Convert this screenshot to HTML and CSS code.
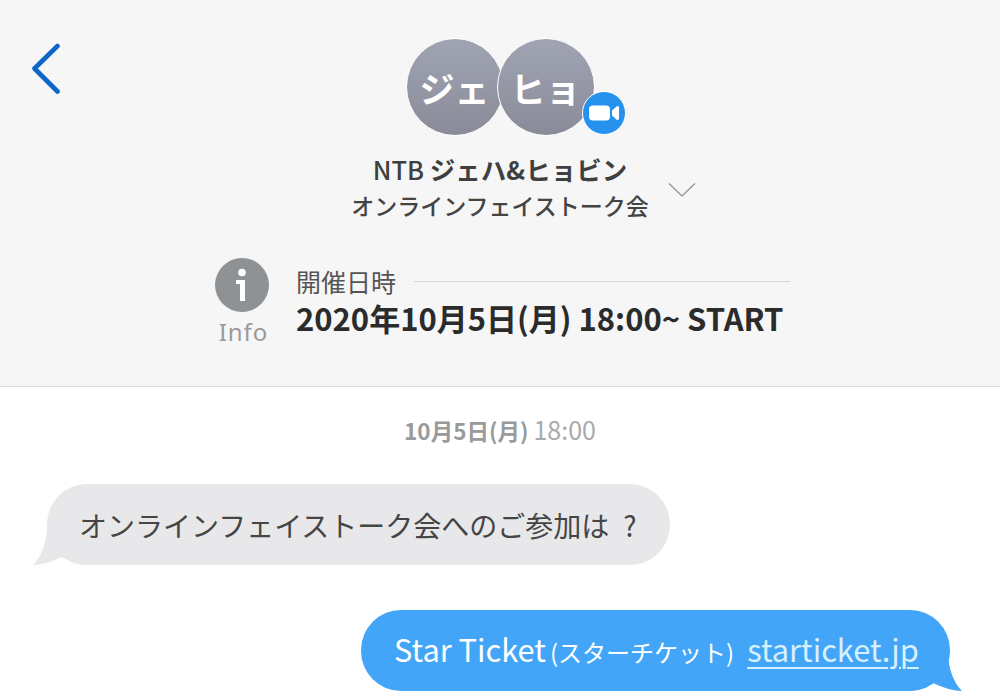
FILE: index.html
```html
<!DOCTYPE html>
<html lang="ja">
<head>
<meta charset="utf-8">
<title>Talk</title>
<link rel="stylesheet" href="styles.css">
</head>
<body>
<div class="screen">
  <header class="head">
    <svg class="back" width="30" height="52" viewBox="0 0 30 52"><path d="M26.5 3 L3.5 25.500 L26.500 48.500" fill="none" stroke="#0e66c8" stroke-width="4.600" stroke-linecap="round" stroke-linejoin="round"/></svg>
    <div class="avatars">
      <div class="avatar">ジェ</div>
      <div class="avatar second">ヒョ</div>
      <div class="badge">
        <svg width="30" height="16" viewBox="0 0 30 16"><rect x="0" y="0.500" width="21" height="15" rx="4" fill="#fff"/><path d="M23 5.500 L27.500 1.500 Q30 0 30 3 L30 13 Q30 16 27.500 14.500 L23 10.500 Z" fill="#fff"/></svg>
      </div>
    </div>
    <div class="title-row">
      <div class="title">
        <div class="name"><span class="latin">NTB</span> ジェハ&amp;ヒョビン</div>
        <div class="sub">オンラインフェイストーク会</div>
      </div>
      <svg class="chev" width="28" height="16" viewBox="0 0 28 16"><path d="M1 1.500 L14 14 L27 1.500" fill="none" stroke="#9a9a9a" stroke-width="1.500"/></svg>
    </div>
    <div class="info">
      <div class="info-side">
        <div class="info-icon">
          <svg width="14" height="34" viewBox="0 0 14 34"><circle cx="7" cy="4.500" r="3.800" fill="#fff"/><path d="M1 12 H10 V33 H5 V16 H1 Z" fill="#fff"/></svg>
        </div>
        <div class="info-label">Info</div>
      </div>
      <div class="info-main">
        <div class="info-top"><span class="info-cap">開催日時</span><span class="rule"></span></div>
        <div class="info-date">2020年10月5日(月) 18:00~ START</div>
      </div>
    </div>
  </header>
  <main class="chat">
    <div class="stamp"><b>10月5日(月)</b> <span class="time">18:00</span></div>
    <div class="row">
      <div class="bubble in"><span class="msg">オンラインフェイストーク会へのご参加は<span class="q">?</span></span>
        <svg class="tail tail-in" width="60" height="40" viewBox="0 0 60 40"><path d="M14 0 C14 18 8 32 0 40 C10 40 20 36 29 32 C36 36 44 40 54 40 L54 0 Z" fill="#e8e8ea"/></svg>
      </div>
    </div>
    <div class="row out-row">
      <div class="bubble out"><span class="msg">Star Ticket<span class="kana">(スターチケット)</span><span class="link">starticket.jp</span></span>
        <svg class="tail tail-out" width="60" height="40" viewBox="0 0 60 40"><path d="M46 0 C46 18 52 32 60 40 C50 40 40 36 31 32 C24 36 16 40 6 40 L6 0 Z" fill="#42a5f7"/></svg>
      </div>
    </div>
  </main>
</div>
</body>
</html>
```
FILE: styles.css
```css
* { box-sizing: border-box; }
html, body { margin: 0; padding: 0; }
body { background: #fff; font-family: "Noto Sans CJK JP", "Noto Sans", sans-serif; }
.screen { width: 1000px; height: 700px; overflow: hidden; }

.head {
  position: relative;
  height: 387px;
  background: #f6f6f6;
  border-bottom: 1px solid #dcdcdc;
  display: flex;
  flex-direction: column;
  align-items: center;
  padding-top: 38px;
}
.back { position: absolute; left: 31px; top: 43px; }

.avatars { position: relative; display: flex; }
.avatar {
  width: 98px;
  height: 98px;
  border-radius: 50%;
  background: linear-gradient(#a0a4b2, #8a8b99);
  border: 1.500px solid #fff;
  color: #fff;
  font-size: 35px;
  font-weight: 700;
  display: flex;
  align-items: center;
  justify-content: center;
  line-height: 1;
}
.second { margin-left: -7px; }
.badge {
  position: absolute;
  right: -31px;
  bottom: 1px;
  width: 44px;
  height: 44px;
  border-radius: 50%;
  background: #2692ee;
  border: 1.500px solid #fff;
  display: flex;
  align-items: center;
  justify-content: center;
}

.title-row { position: relative; margin-top: 15px; }
.title { text-align: center; color: #3f3f3f; }
.name { font-size: 25.500px; font-weight: 700; line-height: 36px; height: 36px; white-space: nowrap; }
.latin { font-weight: 500; }
.sub { font-size: 23px; font-weight: 500; line-height: 34px; margin-top: 1px; color: #444; }
.chev { position: absolute; left: 317px; top: 31px; }

.info { display: flex; width: 575px; margin-top: 36px; gap: 27px; margin-left: 5px; }
.info-side { width: 54px; display: flex; flex-direction: column; align-items: center; flex: none; }
.info-icon {
  width: 54px;
  height: 54px;
  border-radius: 50%;
  background: #8f9294;
  display: flex;
  align-items: center;
  justify-content: center;
}
.info-label { font-family: "Noto Sans", sans-serif; font-size: 24px; color: #999; line-height: 34px; margin: 3px 0 0 3px; letter-spacing: 1px; }
.info-main { flex: 1; }
.info-top { display: flex; align-items: center; gap: 18px; height: 36px; margin-top: 5px; }
.info-cap { font-size: 25px; color: #555; line-height: 36px; }
.rule { flex: 1; height: 1px; background: #d6d6d6; }
.info-date { font-size: 31px; font-weight: 700; color: #2b2b2b; line-height: 38px; white-space: nowrap; }

.chat { padding-top: 25px; }
.stamp { text-align: center; font-size: 22.500px; line-height: 34px; color: #a3a3a3; }
.stamp b { font-weight: 700; color: #9a9a9a; }
.time { font-size: 25px; color: #aaa; }
.row { display: flex; margin-top: 37px; padding-left: 47px; }
.out-row { justify-content: flex-end; padding: 0 50px 0 0; margin-top: 45px; }
.bubble {
  position: relative;
  height: 81px;
  border-radius: 40px;
  font-size: 28px;
  display: flex;
  align-items: center;
  white-space: nowrap;
}
.msg { position: relative; z-index: 1; }
.in { width: 623px; background: #e8e8ea; color: #454545; padding-left: 32px; }
.q { margin-left: 14px; }
.out { width: 589px; background: #42a5f7; color: #fff; padding: 0 0 5px 33px; font-size: 30.800px; }
.kana { font-size: 24px; margin: 0 13px 0 4px; }
.link { color: #d7f0ff; text-decoration: underline; text-underline-offset: 5px; text-decoration-thickness: 1.500px; }
.tail { position: absolute; bottom: 0; }
.tail-in { left: -14px; }
.tail-out { right: -12px; }
```
